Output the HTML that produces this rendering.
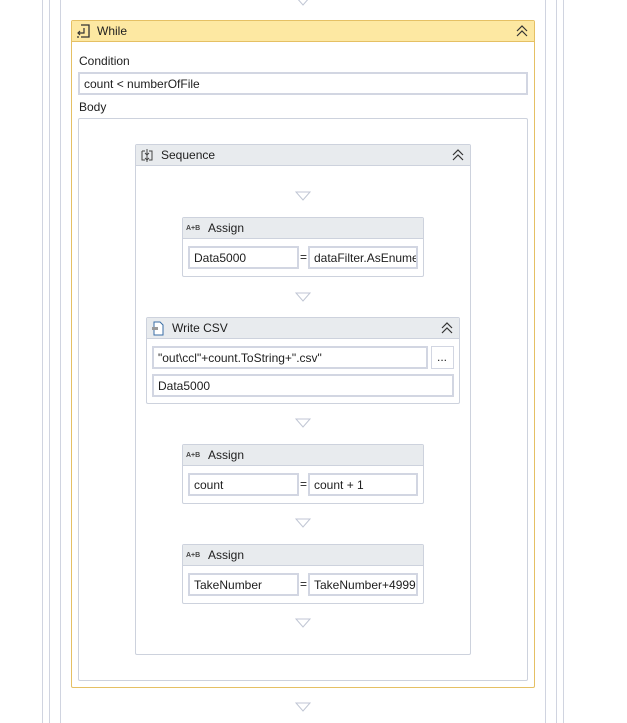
<!DOCTYPE html>
<html><head><style>
*{box-sizing:border-box;margin:0;padding:0}
body{width:627px;height:723px;background:#fff;position:relative;overflow:hidden;font-family:"Segoe UI","Liberation Sans","DejaVu Sans",sans-serif;font-size:12px;color:#1e1e1e}
.a{position:absolute}
.vl{position:absolute;top:0;height:723px;width:1px;background:#d0d4e0}
.box{position:absolute;border:1px solid #cdd2dd;border-radius:2px;background:#fff}
.hdr{position:absolute;left:0;right:0;top:0;height:21px;background:#e8ebee;border-bottom:1px solid #cdd2dd}
.hdr span.t{position:absolute;left:25px;top:3px}
.inp{position:absolute;border:2px solid #d2d6e2;background:#fff;padding:2px 4px;font-size:12px;white-space:nowrap;overflow:hidden;height:23px;line-height:16px}
.tri{position:absolute;width:16px;height:10px}
.chev{position:absolute;right:6px;top:4px;width:12px;height:12px}
.ab{position:absolute;left:3px;top:7px;font-size:7px;font-weight:bold;color:#444}
</style></head><body>
<div class="vl" style="left:42px"></div>
<div class="vl" style="left:49px"></div>
<div class="vl" style="left:60px"></div>
<div class="vl" style="left:545px"></div>
<div class="vl" style="left:556px"></div>
<div class="vl" style="left:563px"></div>

<svg class="tri" style="left:295px;top:-4px" viewBox="0 0 16 10"><path d="M1 1H15L8 9Z" fill="none" stroke="#c0c6d4"/></svg>

<div class="box" style="left:71px;top:20px;width:464px;height:668px;border-color:#e5c064">
  <div class="hdr" style="background:#fde8a2;border-bottom-color:#e5c064;height:21px">
    <svg class="a" style="left:4px;top:3px" width="14" height="14" viewBox="0 0 14 14"><path d="M5 1H13V13H5" fill="none" stroke="#333" stroke-width="1.3"/><path d="M1 13H3M8 4V9H2M4 7L2 9L4 11" fill="none" stroke="#333" stroke-width="1.2"/></svg>
    <span class="t">While</span>
    <svg class="chev" viewBox="0 0 12 12"><path d="M1 6L6 1L11 6M1 11L6 6L11 11" fill="none" stroke="#333" stroke-width="1.2"/></svg>
  </div>
  <div class="a" style="left:7px;top:33px">Condition</div>
  <div class="inp" style="left:6px;top:51px;width:450px">count &lt; numberOfFile</div>
  <div class="a" style="left:7px;top:79px">Body</div>
  <div class="box" style="left:6px;top:97px;width:450px;height:563px"></div>
</div>

<div class="box" style="left:135px;top:144px;width:336px;height:511px">
  <div class="hdr"><svg class="a" style="left:4px;top:3px" width="14" height="15" viewBox="0 0 14 15"><path d="M2 3H5M9 3H12V12H9M5 12H2V3" fill="none" stroke="#444"/><path d="M7 1V14M5 5L7 7L9 5M5 10L7 12L9 10" fill="none" stroke="#444"/></svg><span class="t">Sequence</span>
  <svg class="chev" viewBox="0 0 12 12"><path d="M1 6L6 1L11 6M1 11L6 6L11 11" fill="none" stroke="#333" stroke-width="1.2"/></svg></div>
</div>

<svg class="tri" style="left:295px;top:191px" viewBox="0 0 16 10"><path d="M1 1H15L8 9Z" fill="none" stroke="#c0c6d4"/></svg>
<svg class="tri" style="left:295px;top:292px" viewBox="0 0 16 10"><path d="M1 1H15L8 9Z" fill="none" stroke="#c0c6d4"/></svg>
<svg class="tri" style="left:295px;top:418px" viewBox="0 0 16 10"><path d="M1 1H15L8 9Z" fill="none" stroke="#c0c6d4"/></svg>
<svg class="tri" style="left:295px;top:518px" viewBox="0 0 16 10"><path d="M1 1H15L8 9Z" fill="none" stroke="#c0c6d4"/></svg>
<svg class="tri" style="left:295px;top:618px" viewBox="0 0 16 10"><path d="M1 1H15L8 9Z" fill="none" stroke="#c0c6d4"/></svg>
<svg class="tri" style="left:295px;top:702px" viewBox="0 0 16 10"><path d="M1 1H15L8 9Z" fill="none" stroke="#c0c6d4"/></svg>

<div class="box" style="left:182px;top:217px;width:242px;height:60px">
  <div class="hdr"><span class="ab">A+B</span><span class="t">Assign</span></div>
  <div class="inp" style="left:5px;top:28px;width:111px">Data5000</div>
  <div class="a" style="left:117px;top:32px">=</div>
  <div class="inp" style="left:125px;top:28px;width:110px">dataFilter.AsEnumerable</div>
</div>

<div class="box" style="left:146px;top:317px;width:314px;height:87px">
  <div class="hdr"><svg class="a" style="left:4px;top:3px" width="14" height="15" viewBox="0 0 14 15"><path d="M3 1H9L12 4V14H3Z" fill="#fff" stroke="#3a6ea5"/><rect x="1" y="6" width="6" height="3" fill="#999"/></svg><span class="t">Write CSV</span>
  <svg class="chev" viewBox="0 0 12 12"><path d="M1 6L6 1L11 6M1 11L6 6L11 11" fill="none" stroke="#333" stroke-width="1.2"/></svg></div>
  <div class="inp" style="left:5px;top:28px;width:276px">"out\ccl"+count.ToString+".csv"</div>
  <div class="inp" style="left:284px;top:28px;width:23px;border-width:1px;padding:2px 5px">...</div>
  <div class="inp" style="left:5px;top:56px;width:302px">Data5000</div>
</div>

<div class="box" style="left:182px;top:444px;width:242px;height:60px">
  <div class="hdr"><span class="ab">A+B</span><span class="t">Assign</span></div>
  <div class="inp" style="left:5px;top:28px;width:111px">count</div>
  <div class="a" style="left:117px;top:32px">=</div>
  <div class="inp" style="left:125px;top:28px;width:110px">count + 1</div>
</div>

<div class="box" style="left:182px;top:544px;width:242px;height:60px">
  <div class="hdr"><span class="ab">A+B</span><span class="t">Assign</span></div>
  <div class="inp" style="left:5px;top:28px;width:111px">TakeNumber</div>
  <div class="a" style="left:117px;top:32px">=</div>
  <div class="inp" style="left:125px;top:28px;width:110px">TakeNumber+4999</div>
</div>
</body></html>
